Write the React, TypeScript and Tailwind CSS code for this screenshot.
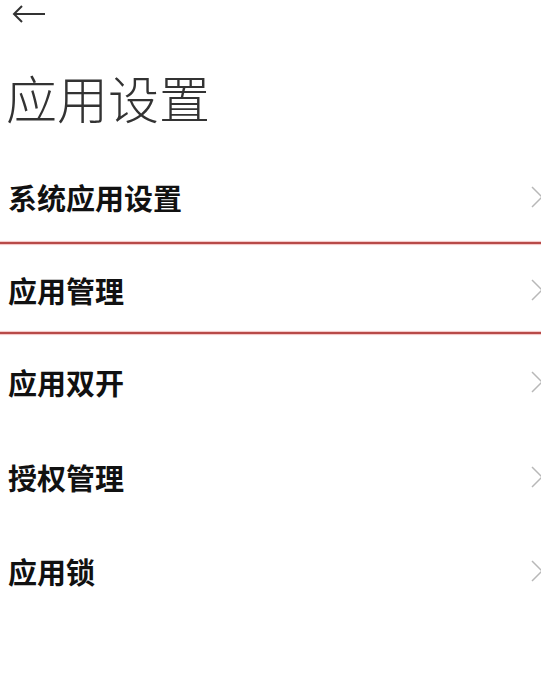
import React from "react";

const items = ["系统应用设置", "应用管理", "应用双开", "授权管理", "应用锁"];

const Chevron: React.FC = () => (
  <svg width="10" height="22" viewBox="0 0 10 22" className="shrink-0">
    <path d="M1 1 L11 11 L1 21" fill="none" stroke="#b8b8b8" strokeWidth="1.5" />
  </svg>
);

const Row: React.FC<{ label: string; className: string }> = ({ label, className }) => (
  <div className={`flex items-center justify-between pl-[8px] ${className}`}>
    <span className="text-[29px] leading-[29px] font-bold text-[#111]">{label}</span>
    <Chevron />
  </div>
);

const RedLine: React.FC = () => <div className="h-[2px] bg-[#b84a48] shadow-[0_0_1px_1px_#f3c4c4]" />;

export default function App() {
  return (
    <div
      className="w-[541px] h-[677px] overflow-hidden bg-white"
      style={{ fontFamily: '"Noto Sans CJK SC", "Noto Sans", sans-serif' }}
    >
      <div className="h-[26px] pl-[12px] pt-[5px]">
        <svg width="34" height="18" viewBox="0 0 34 18">
          <path d="M33 9 H2 M10 1 L2 9 L10 17" fill="none" stroke="#333" strokeWidth="2" />
        </svg>
      </div>
      <div className="h-[126px] pl-[6px] pt-[46px]">
        <h1 className="text-[51px] leading-[51px] font-light text-[#333]">应用设置</h1>
      </div>
      <Row label={items[0]} className="h-[90px]" />
      <RedLine />
      <Row label={items[1]} className="h-[88px] pt-[4px]" />
      <RedLine />
      <Row label={items[2]} className="h-[96px]" />
      <Row label={items[3]} className="h-[94px]" />
      <Row label={items[4]} className="h-[94px]" />
    </div>
  );
}
